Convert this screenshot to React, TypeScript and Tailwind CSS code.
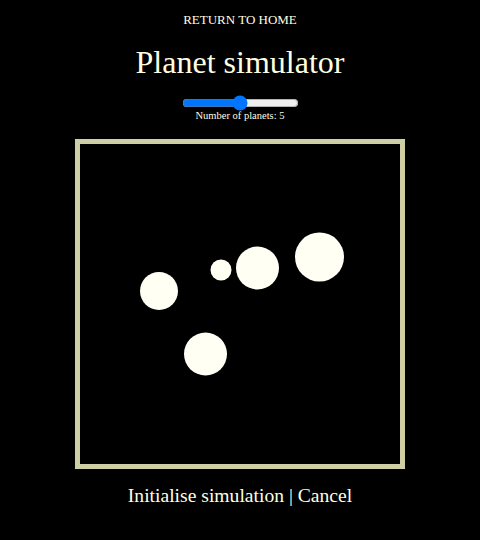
import React from 'react';

const planets = [
  { cx: 79, cy: 147, r: 19 },
  { cx: 141, cy: 126, r: 10.5 },
  { cx: 177.5, cy: 124, r: 21.5 },
  { cx: 239.5, cy: 113, r: 24.5 },
  { cx: 125.5, cy: 210, r: 21.5 },
];

const App: React.FC = () => {
  return (
    <div className="min-h-[540px] w-[480px] bg-black text-[#ffffe0] font-['Liberation_Serif',serif] flex flex-col items-center">
      <a href="#" className="mt-[12px] text-[13px] leading-[16px] uppercase">
        Return to home
      </a>

      <h1 className="mt-[16px] text-[32px] leading-[36px]">Planet simulator</h1>

      <input
        type="range"
        min={1}
        max={9}
        defaultValue={5}
        className="mt-[17px] w-[117px] h-[12px] accent-[#0075ff]"
      />
      <div className="mt-[1px] text-[10.5px] leading-[12px]">Number of planets: 5</div>

      <div className="mt-[17px] w-[330px] h-[330px] border-[5px] border-[#cfcfa6] bg-black">
        <svg width="320" height="320" viewBox="0 0 320 320">
          {planets.map((p, i) => (
            <circle key={i} cx={p.cx} cy={p.cy} r={p.r} fill="#fffff4" />
          ))}
        </svg>
      </div>

      <div className="mt-[15px] text-[19.6px] leading-[24px]">
        <a href="#">Initialise simulation</a> | <a href="#">Cancel</a>
      </div>
    </div>
  );
};

export default App;
